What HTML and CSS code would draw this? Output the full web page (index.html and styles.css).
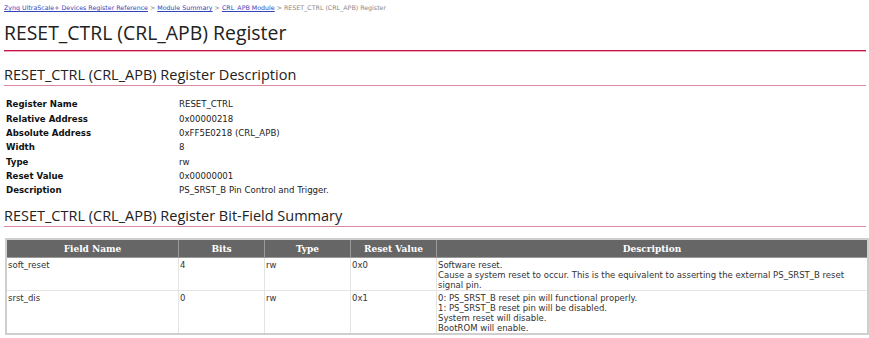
FILE: index.html
```html
<!DOCTYPE html>
<html lang="en">
<head>
  <meta charset="UTF-8">
  <title>RESET_CTRL (CRL_APB) Register</title>
  <link rel="stylesheet" href="styles.css">
</head>
<body>
<div class="crumbs">
  <a href="#">Zynq UltraScale+ Devices Register Reference</a> &gt;
  <a href="#">Module Summary</a> &gt;
  <a href="#">CRL_APB Module</a> &gt;
  <span class="here">RESET_CTRL (CRL_APB) Register</span>
</div>

<h1>RESET_CTRL (CRL_APB) Register</h1>

<h2>RESET_CTRL (CRL_APB) Register Description</h2>
<table class="info">
  <tr><th>Register Name</th><td>RESET_CTRL</td></tr>
  <tr><th>Relative Address</th><td>0x00000218</td></tr>
  <tr><th>Absolute Address</th><td>0xFF5E0218 (CRL_APB)</td></tr>
  <tr><th>Width</th><td>8</td></tr>
  <tr><th>Type</th><td>rw</td></tr>
  <tr><th>Reset Value</th><td>0x00000001</td></tr>
  <tr><th>Description</th><td>PS_SRST_B Pin Control and Trigger.</td></tr>
</table>

<h2 class="summary">RESET_CTRL (CRL_APB) Register Bit-Field Summary</h2>
<table class="fields">
  <tr>
    <th class="c-name">Field Name</th>
    <th class="c-bits">Bits</th>
    <th class="c-type">Type</th>
    <th class="c-reset">Reset Value</th>
    <th>Description</th>
  </tr>
  <tr class="r1">
    <td>soft_reset</td>
    <td>4</td>
    <td>rw</td>
    <td>0x0</td>
    <td>Software reset.<br>Cause a system reset to occur. This is the equivalent to asserting the external PS_SRST_B reset signal pin.</td>
  </tr>
  <tr class="r2">
    <td>srst_dis</td>
    <td>0</td>
    <td>rw</td>
    <td>0x1</td>
    <td>0: PS_SRST_B reset pin will functional properly.<br>1: PS_SRST_B reset pin will be disabled.<br>System reset will disable.<br>BootROM will enable.</td>
  </tr>
</table>
</body>
</html>
```

FILE: styles.css
```css
body {
  margin: 0;
  padding: 0 3px 0 4px;
  font-family: "DejaVu Sans", Verdana, sans-serif;
  color: #222;
  background: #fff;
}

.crumbs {
  font-size: 6.3px;
  color: #888;
  padding-top: 4px;
  height: 10px;
}

.crumbs a {
  color: #3344bb;
}

.crumbs .here {
  color: #888;
}

h1 {
  font-family: "Open Sans", sans-serif;
  font-weight: normal;
  font-size: 19.4px;
  margin: 6px 0 0;
  line-height: 26px;
  padding-bottom: 4px;
  border-bottom: 1px solid #c8164a;
  box-shadow: 0 1px 0 #eaa7b8;
}

h2 {
  font-family: "Open Sans", sans-serif;
  font-weight: normal;
  font-size: 14.5px;
  line-height: 20px;
  margin: 14px 0 0;
  padding-bottom: 0;
  border-bottom: 1px solid #d98aa1;
}

h2.summary {
  margin-top: 9px;
}

.info {
  border-collapse: collapse;
  margin: 11px 0 0 2px;
  font-size: 8.6px;
}

.info th {
  text-align: left;
  font-weight: bold;
  width: 173px;
  padding: 0;
  height: 14.35px;
  color: #111;
}

.info td {
  padding: 0;
  color: #222;
}

.fields {
  border-collapse: collapse;
  border: 2px solid #cfcfcf;
  margin: 11px 0 0 1px;
  width: 864px;
  font-size: 8.5px;
  line-height: 10px;
}

.fields th {
  background: #666;
  color: #fff;
  font-family: "DejaVu Serif", Georgia, serif;
  font-weight: bold;
  font-size: 9px;
  height: 17px;
  padding: 0;
  border: 1px solid #999;
}

.c-name { width: 171px; }
.c-bits { width: 85px; }
.c-type { width: 85px; }
.c-reset { width: 85px; }

.fields td {
  vertical-align: top;
  padding: 2px 1px 0;
  border: 1px solid #e4e4e4;
  color: #333;
}

.r1 td { height: 30px; }
.r2 td { height: 39px; }
```
